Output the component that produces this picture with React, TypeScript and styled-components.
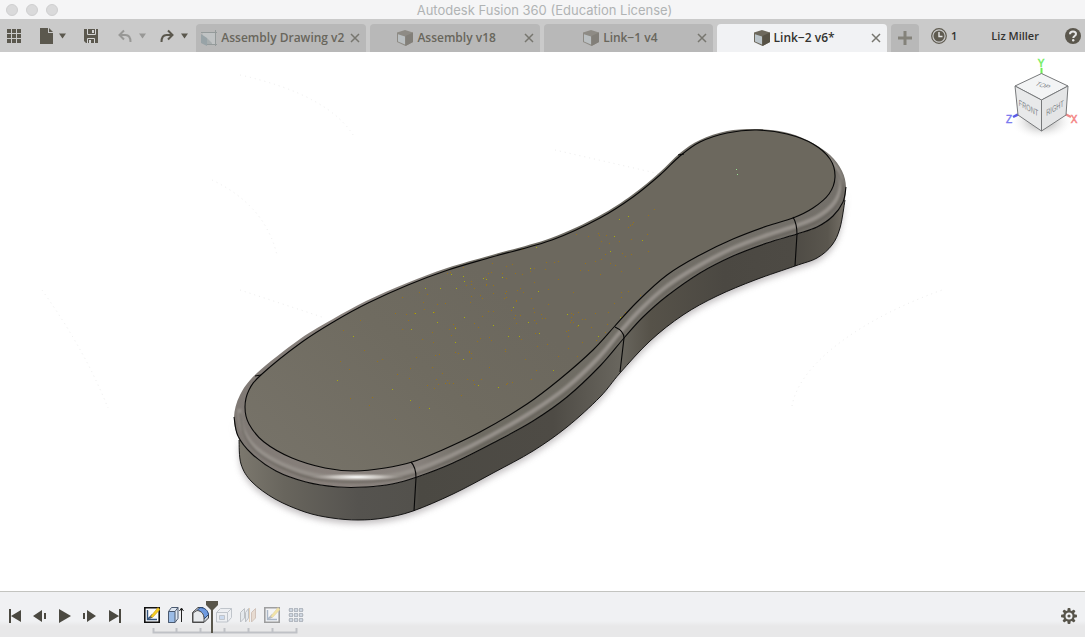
import React from 'react';
import styled, { createGlobalStyle } from 'styled-components';

type Pt = [number, number];

const GlobalStyle = createGlobalStyle`
  * { box-sizing: border-box; }
  body { margin: 0; background: #fff; font-family: "Open Sans", "Noto Sans", sans-serif; }
  button { font: inherit; color: inherit; background: none; border: 0; padding: 0; }
  svg { display: block; }
`;

const Page = styled.div`
  display: flex;
  flex-direction: column;
  min-height: 100vh;
`;

const TitleBar = styled.header`
  display: grid;
  grid-template-columns: 60px 1fr 60px;
  align-items: center;
  height: 19px;
  padding: 0 2px 0 6px;
  background: #f5f5f6;
`;

const Lights = styled.div`
  display: flex;
  gap: 8px;
`;

const Light = styled.button`
  width: 12px;
  height: 12px;
  border-radius: 50%;
  background: #dadadb;
  border: 1px solid #cfcfd0;
`;

const WindowTitle = styled.h1`
  margin: 0;
  text-align: center;
  font: 400 13px/18px Inter, sans-serif;
  color: #b0b3b4;
  white-space: nowrap;
`;

const Toolbar = styled.div`
  display: flex;
  height: 33px;
  background: #cacaca;
`;

const Tools = styled.div`
  display: flex;
  align-items: center;
  gap: 18px;
  flex: none;
  padding: 0 8px 0 7px;
`;

const ToolGroup = styled.div<{ $gap: number }>`
  display: flex;
  align-items: center;
  gap: ${(p) => p.$gap}px;
`;

const ToolButton = styled.button<{ $w: number; $muted?: boolean }>`
  width: ${(p) => p.$w}px;
  height: 20px;
  display: flex;
  align-items: center;
  justify-content: center;
  color: ${(p) => (p.$muted ? '#989896' : '#5b584e')};
`;

const Tabs = styled.nav`
  display: flex;
  flex: 1;
  gap: 4px;
  padding-top: 5px;
  min-width: 0;
`;

const Tab = styled.div<{ $active?: boolean }>`
  flex: 1;
  min-width: 0;
  display: flex;
  align-items: center;
  padding-right: 6px;
  border-radius: 4px 4px 0 0;
  background: ${(p) => (p.$active ? '#f1f2f4' : '#b8b8b8')};
  color: ${(p) => (p.$active ? '#33322f' : '#68665c')};
`;

const TabLabel = styled.button`
  flex: 1;
  min-width: 0;
  display: flex;
  align-items: center;
  justify-content: center;
  gap: 4px;
  font-size: 12px;
  line-height: 18px;
  font-weight: 600;
  white-space: nowrap;
`;

const CloseButton = styled.button`
  width: 10px;
  height: 10px;
  color: #77766f;
`;

const AddTab = styled.button`
  flex: none;
  width: 28px;
  display: flex;
  align-items: center;
  justify-content: center;
  border-radius: 4px 4px 0 0;
  background: #b8b8b8;
  color: #84827a;
`;

const Account = styled.div`
  flex: none;
  width: 166px;
  display: flex;
  align-items: center;
  justify-content: space-between;
  padding: 0 4px 0 12px;
  font-size: 11px;
  line-height: 16px;
  font-weight: 600;
  color: #33322f;
`;

const Jobs = styled.button`
  display: flex;
  align-items: center;
  gap: 4px;
  margin-right: 8px;
`;

const Viewport = styled.main`
  position: relative;
  flex: 1;
  display: flex;
  background: #fff;
`;

const Scene = styled.svg`
  width: 100%;
  height: auto;
`;

const ViewCube = styled.svg`
  position: absolute;
  top: 0;
  right: 0;
`;

const Footer = styled.footer`
  display: flex;
  align-items: flex-start;
  height: 46px;
  padding: 15px 8px 0;
  border-top: 1px solid #c3c4c0;
  background: linear-gradient(#f0f1f3 0 29px, #e8e8e9 34px);
  color: #4b4941;
`;

const Playback = styled.div`
  display: flex;
  gap: 11px;
  width: 136px;
`;

const PlayButton = styled.button`
  width: 14px;
  height: 18px;
  display: flex;
  align-items: center;
  justify-content: center;
`;

const Timeline = styled.div`
  position: relative;
  display: flex;
  flex-wrap: wrap;
  width: 168px;
`;

const Feature = styled.button<{ $pending?: boolean }>`
  width: 24px;
  height: 16px;
  opacity: ${(p) => (p.$pending ? 0.36 : 1)};
`;

const Track = styled.svg`
  margin-top: 5px;
`;

const Marker = styled.svg`
  position: absolute;
  left: 61px;
  top: -6px;
`;

const SettingsButton = styled.button`
  margin-left: auto;
  width: 16px;
  height: 18px;
  display: flex;
  align-items: center;
`;

const Caret = () => (
  <svg width="7" height="6" viewBox="0 0 7 6"><path d="M0 .5h7L3.5 5.500z" fill="currentColor" /></svg>
);

const GridIcon = () => (
  <svg width="14" height="14" viewBox="0 0 14 14" fill="currentColor">
    {[0, 5, 10].map((y) => [0, 5, 10].map((x) => <rect key={`${x}-${y}`} x={x} y={y} width="4" height="4" />))}
  </svg>
);

const FileIcon = () => (
  <svg width="14" height="16" viewBox="0 0 14 16" fill="currentColor">
    <path d="M1 0h8v5h5v11H1z" /><path d="M10 0l4 4h-4z" />
  </svg>
);

const SaveIcon = () => (
  <svg width="14" height="14" viewBox="0 0 14 14">
    <path d="M0 0h14v14H2l-2-2z" fill="currentColor" />
    <path d="M3.500 0v5.500h8V0M3.500 14V9.500h7V14" fill="none" stroke="#d4d4d4" />
    <path d="M8 1h2v3H8zM5 11h2v3H5z" fill="#d4d4d4" />
  </svg>
);

const UndoIcon = ({ flip }: { flip?: boolean }) => (
  <svg width="14" height="14" viewBox="0 0 14 14" fill="none" stroke="currentColor" strokeWidth="2">
    <g transform={flip ? 'matrix(-1 0 0 1 14 0)' : undefined}>
      <path d="M6 1.500L1.500 6 6 10.500M2 6h5.500c3.500 0 5 2.500 5 7" />
    </g>
  </svg>
);

const CloseIcon = () => (
  <svg width="10" height="10" viewBox="0 0 10 10" stroke="currentColor" strokeWidth="1.500"><path d="M1 1l8 8M9 1L1 9" /></svg>
);

const CubeIcon = ({ active }: { active?: boolean }) => (
  <svg width="16" height="16" viewBox="0 0 16 16" opacity={active ? 1 : 0.55}>
    <path d="M0 2.500L8 0l8 2.500v9.500l-7.500 4L0 12z" fill="#6d685c" />
    <path d="M8.500 6L16 2.500V12l-7.500 4z" fill="#575246" />
    <path d="M1 4.200l7 2.300v8L1 11.500z" fill="#bcc5ca" />
  </svg>
);

const DrawingIcon = () => (
  <svg width="16" height="16" viewBox="0 0 16 16" fill="none">
    <path d="M2 2h12v12H2z" fill="#c0c3c4" />
    <path d="M0 2.500h16M14.500 0v16M6 14.500h10" stroke="#949a9a" />
    <path d="M0 4l6 4v8l-6-3z" fill="#98a3a7" />
    <path d="M6 8l5 5v1H6z" fill="#a7adae" />
  </svg>
);

const ClockIcon = () => (
  <svg width="16" height="16" viewBox="0 0 16 16">
    <circle cx="8" cy="8" r="7.300" fill="none" stroke="#5f5b50" strokeWidth="1.200" />
    <circle cx="8" cy="8" r="5.500" fill="#5f5b50" />
    <path d="M8 4v4.500h3.500" fill="none" stroke="#e4e4e4" strokeWidth="1.400" />
  </svg>
);

const HelpIcon = () => (
  <svg width="16" height="16" viewBox="0 0 16 16">
    <circle cx="8" cy="8" r="8" fill="#5b574d" />
    <path d="M5 6.200C5 2.500 11 2.700 11 6c0 2-2.700 2-2.700 4" fill="none" stroke="#e4e4e4" strokeWidth="2" />
    <circle cx="8.200" cy="12.300" r="1.200" fill="#e4e4e4" />
  </svg>
);

const GearIcon = () => (
  <svg width="16" height="16" viewBox="0 0 16 16">
    <g fill="#57544a">
      {[0, 45, 90, 135].map((a) => (
        <rect key={a} x="6.500" y="0" width="3" height="16" rx="1" transform={`rotate(${a} 8 8)`} />
      ))}
      <circle cx="8" cy="8" r="5.800" />
    </g>
    <circle cx="8" cy="8" r="3.500" fill="#eff0f2" />
    <circle cx="8" cy="8" r="1.600" fill="#57544a" />
  </svg>
);

const playbackIcons: { label: string; d: string }[] = [
  { label: 'Go to start', d: 'M1 0h2v14H1zM13 1v12L3 7z' },
  { label: 'Step back', d: 'M9 1v12L0 7zM11 4h2v6h-2z' },
  { label: 'Play', d: 'M1 0v14l12-7z' },
  { label: 'Step forward', d: 'M4 1v12l9-6zM0 4h2v6H0z' },
  { label: 'Go to end', d: 'M1 1v12l10-6zM11 0h2v14h-2z' },
];

const SketchIcon = () => (
  <svg width="16" height="16" viewBox="0 0 16 16" fill="none">
    <path d="M.8.800h14.400v14.400H.8z" fill="#fafbfc" stroke="#111" strokeWidth="1.600" />
    <path d="M3.500 3v9.500H13M3.500 12.500l5-5" stroke="#32547f" strokeWidth="1.400" />
    <path d="M6.500 9.500l7.500-9 2 2-7.500 8z" fill="#f5ce22" stroke="#c58d10" strokeWidth=".5" />
    <path d="M6.500 9.500l2 1-3 1.500z" fill="#555" />
  </svg>
);

const ExtrudeIcon = () => (
  <svg width="16" height="16" viewBox="0 0 16 16" stroke="#4b5a70" strokeWidth="1">
    <path d="M.5 4.500l3-4h6.500v11l-3 4H.5z" fill="#dfe7f1" />
    <path d="M.5 4.500H7v11H.5z" fill="#9bbce6" />
    <path d="M7 4.500l3-4" /><path d="M13.500 15V1.500M11.500 4l2-3 2 3" stroke="#222" fill="none" />
  </svg>
);

const FilletIcon = () => (
  <svg width="17" height="16" viewBox="0 0 17 16" strokeWidth="1">
    <path d="M.5 15V5.500L6 .500h5L16.500 7v4L12 15.500H.5z" fill="#ccd3dc" stroke="#444" />
    <path d="M5 3.500L8 .600c5 0 8 3 8.500 7L12 12c0-5-2.500-8-7-8.500z" fill="#6f9be0" stroke="#244577" />
    <path d="M1 6l4-2.500c4.500.5 7 3.500 7 8.500v3H1z" fill="#e7eaed" stroke="#555" />
  </svg>
);

const ShellIcon = () => (
  <svg width="16" height="16" viewBox="0 0 16 16" fill="#e9edf2" stroke="#6d7886">
    <path d="M.5 5.500l4-4h11v9l-4 4.500H.500zM.5 5.500h11V15M11.500 5.500l4-4" />
    <path d="M3.500 8.500h5v4h-5z" fill="#8fb4e6" />
  </svg>
);

const MirrorIcon = () => (
  <svg width="16" height="16" viewBox="0 0 16 16" stroke="#666d77">
    <path d="M.5 5.500l4-4v9.500l-4 4zM5.500 5.500l3-4v9.500l-3 4z" fill="#d4dbe4" />
    <path d="M11.500 5.500l4-4v9.500l-4 4z" fill="#d9b797" stroke="#9b7559" />
    <path d="M9.500 1v14" stroke="#d49a53" />
  </svg>
);

const PatternIcon = () => (
  <svg width="16" height="16" viewBox="0 0 16 16" fill="#b4c9e6" stroke="#4d5a6d">
    {[1.5, 6.5, 11.5].map((y) => [1.5, 6.5, 11.5].map((x) => <rect key={`${x}-${y}`} x={x} y={y} width="3" height="3" />))}
    <path d="M0 3h16M0 8h16M0 13h16" strokeWidth=".6" />
  </svg>
);

const features: { name: string; icon: React.ReactNode; pending?: boolean }[] = [
  { name: 'Sketch', icon: <SketchIcon /> },
  { name: 'Extrude', icon: <ExtrudeIcon /> },
  { name: 'Fillet', icon: <FilletIcon /> },
  { name: 'Shell', icon: <ShellIcon />, pending: true },
  { name: 'Mirror', icon: <MirrorIcon />, pending: true },
  { name: 'Second sketch', icon: <SketchIcon />, pending: true },
  { name: 'Pattern', icon: <PatternIcon />, pending: true },
];

const tabs = [
  { name: 'Assembly Drawing v2', drawing: true },
  { name: 'Assembly v18' },
  { name: 'Link\u22121 v4' },
  { name: 'Link\u22122 v6*', active: true },
];

// Smooth curve through a list of points (Catmull-Rom written as cubic segments).
function spline(pts: Pt[], closed = false) {
  const n = pts.length;
  const at = (i: number): Pt => (closed ? pts[(i + n) % n] : pts[Math.max(0, Math.min(n - 1, i))]);
  let d = `M${pts[0][0]} ${pts[0][1]}`;
  for (let i = 0; i < (closed ? n : n - 1); i++) {
    const [a, b, c, e] = [at(i - 1), at(i), at(i + 1), at(i + 2)];
    const c1 = [b[0] + (c[0] - a[0]) / 6, b[1] + (c[1] - a[1]) / 6];
    const c2 = [c[0] - (e[0] - b[0]) / 6, c[1] - (e[1] - b[1]) / 6];
    d += `C${c1[0].toFixed(1)} ${c1[1].toFixed(1)} ${c2[0].toFixed(1)} ${c2[1].toFixed(1)} ${c[0]} ${c[1]}`;
  }
  return closed ? d + 'Z' : d;
}

const faceFront: Pt[] = [
  [245, 407], [249, 424], [264, 442], [292, 458], [325, 468], [355, 471], [385, 468], [412, 462], [440, 451],
  [480, 432], [527, 404], [560, 379], [593, 350], [614, 327], [637, 302], [667, 275], [700, 255], [733, 239],
  [767, 226], [793, 218], [813, 208], [829, 194], [835, 177],
];
const faceBack: Pt[] = [
  [830, 159], [813, 144], [787, 134], [757, 130], [727, 133], [700, 142], [680, 156], [660, 175], [633, 197],
  [600, 218], [552, 240], [492, 257], [448, 270], [408, 285], [368, 303], [335, 321], [302, 342], [262, 374], [249, 390],
];
const rimFront: Pt[] = [
  [234, 417], [238, 436], [252, 454], [276, 471], [306, 482], [338, 487], [366, 487], [392, 484], [417, 477],
  [453, 463], [493, 443], [533, 421], [567, 397], [600, 366], [624, 338], [643, 317], [667, 296], [700, 273],
  [733, 256], [767, 243], [797, 234], [817, 227], [833, 216], [843, 202], [846, 187],
];
const rimBack: Pt[] = [
  [842, 171], [830, 155], [807, 140], [784, 132], [757, 129], [727, 131], [700, 140], [680, 153], [659, 173],
  [632, 195], [599, 216], [551, 238], [492, 255], [447, 268], [407, 283], [366, 301], [333, 319], [300, 339], [257, 373], [240, 395],
];
const base: Pt[] = [
  [239, 440], [241, 464], [252, 482], [275, 499], [305, 512], [332, 518], [358, 520], [384, 518], [413, 511],
  [453, 494], [493, 473], [533, 451], [567, 427], [600, 397], [620, 373], [650, 341], [683, 315], [717, 296],
  [755, 280], [795, 266], [817, 258], [832, 245], [840, 228], [845, 200],
];
const ridge: Pt[] = [
  [239, 409], [243, 430], [256, 448], [282, 464], [315, 475], [353, 478], [388, 476], [415, 470], [450, 456],
  [490, 436], [533, 411], [567, 387], [599, 357], [620, 332], [640, 310], [667, 286], [700, 265], [733, 248], [767, 235],
  [795, 226], [817, 217], [834, 203], [841, 186], [838, 171], [825, 154],
];

const face = spline([...faceFront, ...faceBack], true);
const rim = spline([...rimFront, ...rimBack], true);
const rimLine = spline(rimFront);
const side = `${spline(base)}${spline([...rimFront].reverse()).replace('M', 'L')}Z`;

// Sparse coloured specks on the brushed face.
const specks = (() => {
  let s = 90210;
  const rnd = () => { s = (s * 16807) % 2147483647; return s / 2147483647; };
  return Array.from({ length: 270 }, () => {
    const t = (rnd() + rnd()) / 2;
    const u = rnd() * 2 - 1;
    return {
      x: Math.round(310 + t * 400),
      y: Math.round(380 - t * 125 + u * 68),
      c: rnd() > 0.82 ? '#a9ac0c' : '#98731a',
    };
  });
})();

const Model = () => (
  <Scene viewBox="0 52 1085 539" role="img" aria-label="Link-2 body">
    <defs>
      <linearGradient id="faceFill" gradientUnits="userSpaceOnUse" x1="290" y1="470" x2="480" y2="270">
        <stop offset="0" stopColor="#767268" /><stop offset=".6" stopColor="#6f6b60" /><stop offset="1" stopColor="#6c685e" />
      </linearGradient>
      <linearGradient id="sideFill" gradientUnits="userSpaceOnUse" x1="236" y1="0" x2="846" y2="0">
        <stop offset="0" stopColor="#7d796f" /><stop offset=".08" stopColor="#68655d" /><stop offset=".2" stopColor="#55534f" />
        <stop offset=".29" stopColor="#53514c" /><stop offset=".3" stopColor="#4b4943" /><stop offset=".52" stopColor="#4e4b45" />
        <stop offset=".63" stopColor="#69665e" /><stop offset=".68" stopColor="#565249" /><stop offset=".8" stopColor="#4b4842" />
        <stop offset=".91" stopColor="#4d4a44" /><stop offset=".97" stopColor="#5a564e" /><stop offset="1" stopColor="#777269" />
      </linearGradient>
      <linearGradient id="rimFill" gradientUnits="userSpaceOnUse" x1="235" y1="0" x2="846" y2="0">
        <stop offset="0" stopColor="#7f7974" /><stop offset=".18" stopColor="#8a827d" /><stop offset=".3" stopColor="#87817c" />
        <stop offset=".4" stopColor="#6e6b62" /><stop offset="1" stopColor="#74706a" />
      </linearGradient>
      <radialGradient id="glint">
        <stop offset="0" stopColor="#fff" /><stop offset=".5" stopColor="#d9d5d0" stopOpacity=".7" /><stop offset="1" stopColor="#9c9691" stopOpacity="0" />
      </radialGradient>
      <filter id="soft" x="-5%" y="-5%" width="110%" height="110%"><feGaussianBlur stdDeviation="3" /></filter>
      <filter id="softLine" x="-5%" y="-5%" width="110%" height="110%"><feGaussianBlur stdDeviation="1.200" /></filter>
      <clipPath id="faceClip"><path d={face} /></clipPath>
      <clipPath id="rimClip"><path d={rim} /></clipPath>
    </defs>
    <g fill="none" stroke="#ededed" strokeDasharray="1 4">
      <path d="M42 290Q85 350 108 408" /><path d="M792 406C800 360 870 315 945 289" />
      <path d="M212 180Q265 205 277 255" /><path d="M240 75Q330 95 355 138" />
      <path d="M240 290L325 318" /><path d="M555 150L660 174" />
    </g>
    <path d={side} fill="#aaa6a8" opacity=".7" filter="url(#soft)" transform="translate(0 4)" />
    <path d={side} fill="url(#sideFill)" />
    <path d={rim} fill="url(#rimFill)" />
    <g clipPath="url(#rimClip)" fill="none" filter="url(#softLine)">
      <path d={spline(ridge)} stroke="#96918b" strokeWidth="4" />
      <path d={spline(ridge)} stroke="#65615a" strokeWidth="1.500" transform="translate(1 4)" />
    </g>
    <ellipse cx="357" cy="477" rx="48" ry="4" fill="url(#glint)" />
    <path d={face} fill="url(#faceFill)" />
    <g clipPath="url(#faceClip)" shapeRendering="crispEdges">
      {specks.map((p, i) => <rect key={i} x={p.x} y={p.y} width="1" height="1" fill={p.c} />)}
      <path d="M736 169h1v1h-1zM737 174h1v1h-1z" fill="#98e092" />
    </g>
    <g fill="none" stroke="#080808" strokeWidth="1.100">
      <path d={rimLine} />
      <path d={face} />
      <path d={spline(base)} strokeWidth=".9" />
      <path d="M411 462Q416 467 416 478L414 511M615 327Q624 331 624 338L620 372M793 217Q797 224 797 234L795 266M255 376L261 375M678 155L684 154" />
    </g>
  </Scene>
);

const Orientation = () => (
  <ViewCube width="85" height="100" viewBox="1000 52 85 100" role="img" aria-label="View cube">
    <defs>
      <radialGradient id="cubeShade"><stop offset="0" stopColor="#858585" /><stop offset="1" stopColor="#fff" stopOpacity="0" /></radialGradient>
    </defs>
    <ellipse cx="1042" cy="121" rx="32" ry="19" fill="url(#cubeShade)" />
    <path d="M1041.500 68v6" stroke="#6fef55" strokeWidth="2" />
    <path d="M1019 114l-6 3" stroke="#5b5be8" strokeWidth="2.500" />
    <path d="M1065 114l6 3" stroke="#f08a8a" strokeWidth="2.500" />
    <g stroke="#77797b" strokeWidth="1" strokeLinejoin="round">
      <path d="M1041.500 73.500L1068 86l-26.500 14L1015 86z" fill="#f3f4f5" />
      <path d="M1015 86l26.500 14v31L1018 115z" fill="#e8e9ea" />
      <path d="M1068 86l-26.500 14v31L1066 115z" fill="#e4e5e6" />
    </g>
    <g fontFamily="Liberation Sans, sans-serif" fontSize="8" fill="#7d8387" textAnchor="middle">
      <text transform="matrix(.8 .25 -.7 .6 1041 87)">TOP</text>
      <text transform="matrix(.7 .4 0 1.100 1028.500 111)">FRONT</text>
      <text transform="matrix(.7 -.4 0 1.100 1055 111)">RIGHT</text>
    </g>
    <g fontFamily="Liberation Sans, sans-serif" fontSize="10" textAnchor="middle" strokeWidth=".5">
      <text x="1041" y="67" fill="#74ee63" stroke="#74ee63">Y</text>
      <text x="1009" y="123" fill="#7979ef" stroke="#7979ef">Z</text>
      <text x="1074" y="123" fill="#f48888" stroke="#f48888">X</text>
    </g>
  </ViewCube>
);

export default function App() {
  return (
    <Page>
      <GlobalStyle />
      <TitleBar>
        <Lights>
          <Light aria-label="Close window" /><Light aria-label="Minimise window" /><Light aria-label="Zoom window" />
        </Lights>
        <WindowTitle>Autodesk Fusion 360 (Education License)</WindowTitle>
      </TitleBar>
      <Toolbar>
        <Tools>
          <ToolButton $w={14} aria-label="Data panel"><GridIcon /></ToolButton>
          <ToolGroup $gap={6}>
            <ToolButton $w={14} aria-label="File"><FileIcon /></ToolButton>
            <ToolButton $w={7} aria-label="File menu"><Caret /></ToolButton>
          </ToolGroup>
          <ToolButton $w={14} aria-label="Save"><SaveIcon /></ToolButton>
          <ToolGroup $gap={12}>
            <ToolGroup $gap={5}>
              <ToolButton $w={18} $muted aria-label="Undo"><UndoIcon /></ToolButton>
              <ToolButton $w={7} $muted aria-label="Undo history"><Caret /></ToolButton>
            </ToolGroup>
            <ToolGroup $gap={5}>
              <ToolButton $w={18} aria-label="Redo"><UndoIcon flip /></ToolButton>
              <ToolButton $w={7} aria-label="Redo history"><Caret /></ToolButton>
            </ToolGroup>
          </ToolGroup>
        </Tools>
        <Tabs>
          {tabs.map((t) => (
            <Tab key={t.name} $active={t.active}>
              <TabLabel>{t.drawing ? <DrawingIcon /> : <CubeIcon active={t.active} />}{t.name}</TabLabel>
              <CloseButton aria-label={`Close ${t.name}`}><CloseIcon /></CloseButton>
            </Tab>
          ))}
          <AddTab aria-label="New design">
            <svg width="14" height="14" viewBox="0 0 14 14" fill="currentColor"><path d="M5.500 0h3v5.500H14v3H8.500V14h-3V8.500H0v-3h5.500z" /></svg>
          </AddTab>
        </Tabs>
        <Account>
          <Jobs aria-label="Job status"><ClockIcon />1</Jobs>
          <button>Liz Miller</button>
          <button aria-label="Help"><HelpIcon /></button>
        </Account>
      </Toolbar>
      <Viewport>
        <Model />
        <Orientation />
      </Viewport>
      <Footer>
        <Playback>
          {playbackIcons.map((p) => (
            <PlayButton key={p.label} aria-label={p.label}>
              <svg width="14" height="14" viewBox="0 0 14 14"><path d={p.d} fill="currentColor" /></svg>
            </PlayButton>
          ))}
        </Playback>
        <Timeline>
          {features.map((f) => <Feature key={f.name} $pending={f.pending} aria-label={f.name}>{f.icon}</Feature>)}
          <Track width="160" height="6" viewBox="0 0 160 6">
            <path d="M9.500 0v4.500h143V0M32.500 0v5M56.500 0v5M80.500 0v5M104.500 0v5M128.500 0v5" fill="none" stroke="#bfc1c6" strokeWidth="2" />
          </Track>
          <Marker width="14" height="32" viewBox="0 0 14 32"><path d="M1 0h12v4L8 9v23H6V9L1 4z" fill="#59564b" /></Marker>
        </Timeline>
        <SettingsButton aria-label="Settings"><GearIcon /></SettingsButton>
      </Footer>
    </Page>
  );
}
